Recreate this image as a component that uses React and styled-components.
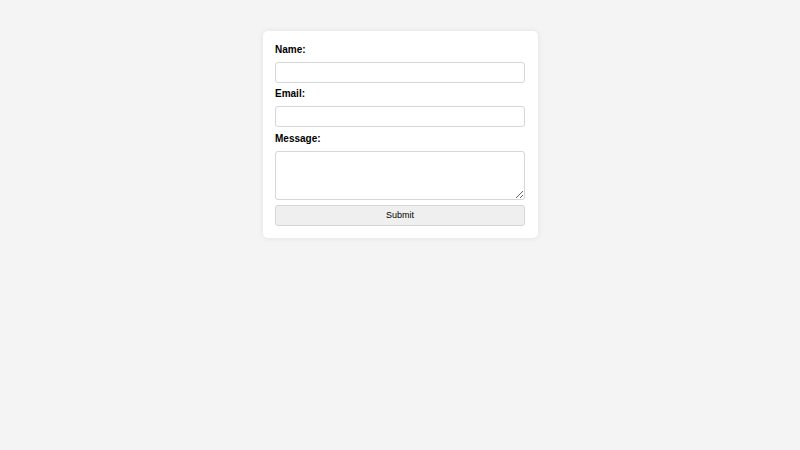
import React from 'react'
import styled, { createGlobalStyle } from 'styled-components'

const GlobalStyle = createGlobalStyle`
    html, body {
        margin: 0;
        padding: 0;
        background: #f4f4f4;
        font-family: "Liberation Sans", Arial, sans-serif;
    }
    body {
        min-height: 450px;
    }
`

const Page = styled.div`
    display: flex;
    justify-content: center;
    padding-top: 31px;
`

const Card = styled.form`
    width: 275px;
    box-sizing: border-box;
    padding: 12.5px;
    background: #fff;
    border-radius: 5px;
    box-shadow: 0 0 6px rgba(0, 0, 0, 0.08);
    display: flex;
    flex-direction: column;
`

const Label = styled.label`
    display: block;
    font-size: 10px;
    font-weight: bold;
    line-height: 12px;
    color: #000;
    margin-bottom: 6px;
`

const Input = styled.input`
    display: block;
    box-sizing: border-box;
    width: 100%;
    height: 21px;
    margin: 0 0 5.5px;
    padding: 0 5px;
    font-family: inherit;
    font-size: 10px;
    border: 1px solid #d6d6d6;
    border-radius: 3px;
    background: #fff;
    outline: none;
`

const TextArea = styled.textarea`
    display: block;
    box-sizing: border-box;
    width: 100%;
    height: 49px;
    margin: 0 0 5.5px;
    padding: 5px;
    font-family: inherit;
    font-size: 10px;
    border: 1px solid #d6d6d6;
    border-radius: 3px;
    background: #fff;
    outline: none;
`

const Button = styled.button`
    display: block;
    box-sizing: border-box;
    width: 100%;
    height: 20.5px;
    padding: 0;
    font-family: inherit;
    font-size: 9px;
    color: #000;
    background: #efefef;
    border: 1px solid #d6d6d6;
    border-radius: 3px;
    cursor: pointer;
`

const App = () => {
    return (
        <>
            <GlobalStyle />
            <Page>
                <Card onSubmit={(e) => e.preventDefault()}>
                    <Label htmlFor="name">Name:</Label>
                    <Input id="name" type="text" />
                    <Label htmlFor="email">Email:</Label>
                    <Input id="email" type="email" />
                    <Label htmlFor="message">Message:</Label>
                    <TextArea id="message" />
                    <Button type="submit">Submit</Button>
                </Card>
            </Page>
        </>
    )
}

export default App
